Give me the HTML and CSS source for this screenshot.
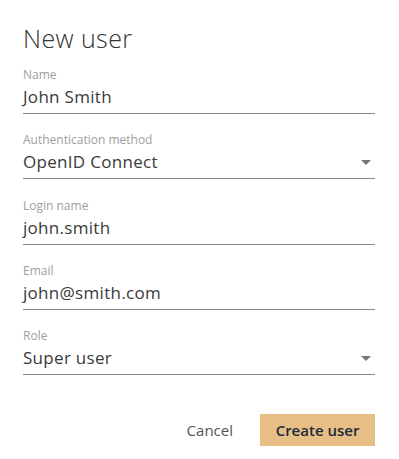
FILE: index.html
```html
<!DOCTYPE html>
<html>
<head>
<meta charset="utf-8">
<link rel="stylesheet" href="styles.css">
</head>
<body>
<div class="dialog">
  <h1 class="title">New user</h1>
  <div class="field">
    <div class="label">Name</div>
    <div class="value">John Smith</div>
  </div>
  <div class="field">
    <div class="label">Authentication method</div>
    <div class="value select"><span>OpenID Connect</span><span class="arrow"></span></div>
  </div>
  <div class="field">
    <div class="label">Login name</div>
    <div class="value">john.smith</div>
  </div>
  <div class="field">
    <div class="label">Email</div>
    <div class="value">john@smith.com</div>
  </div>
  <div class="field">
    <div class="label">Role</div>
    <div class="value select"><span>Super user</span><span class="arrow"></span></div>
  </div>
  <div class="actions">
    <button class="btn cancel">Cancel</button>
    <button class="btn primary">Create user</button>
  </div>
</div>
</body>
</html>
```
FILE: styles.css
```css
html, body {
  margin: 0;
  padding: 0;
  background: #ffffff;
}
body {
  font-family: "Open Sans", "Liberation Sans", sans-serif;
  color: #333333;
}
.dialog {
  width: 399px;
  height: 459px;
  box-sizing: border-box;
  padding: 22px 24px 0 23px;
}
.title {
  margin: 0;
  font-size: 25px;
  line-height: 32px;
  font-weight: 300;
  letter-spacing: 0.4px;
  color: #333333;
}
.field {
  margin-top: 13px;
  border-bottom: 1px solid #8a8a8a;
  padding-bottom: 4px;
}
.field + .field {
  margin-top: 18.3px;
}
.label {
  font-size: 12px;
  line-height: 16px;
  color: #9e9e9e;
  margin-bottom: 2px;
}
.value {
  font-size: 17px;
  line-height: 24px;
  letter-spacing: 0.3px;
  color: #3a3a3a;
}
.select {
  display: flex;
  justify-content: space-between;
  align-items: center;
}
.arrow {
  width: 0;
  height: 0;
  border-left: 5px solid transparent;
  border-right: 5px solid transparent;
  border-top: 5px solid #757575;
  margin-right: 4px;
}
.actions {
  display: flex;
  justify-content: flex-end;
  align-items: center;
  gap: 27px;
  margin-top: 39px;
}
.btn {
  font-family: inherit;
  font-size: 15px;
  border: none;
  background: none;
  padding: 0;
  cursor: pointer;
}
.cancel {
  color: #555555;
}
.primary {
  width: 115px;
  height: 32px;
  background: #e7bf86;
  color: #1c2a3a;
  font-weight: 600;
}
```
